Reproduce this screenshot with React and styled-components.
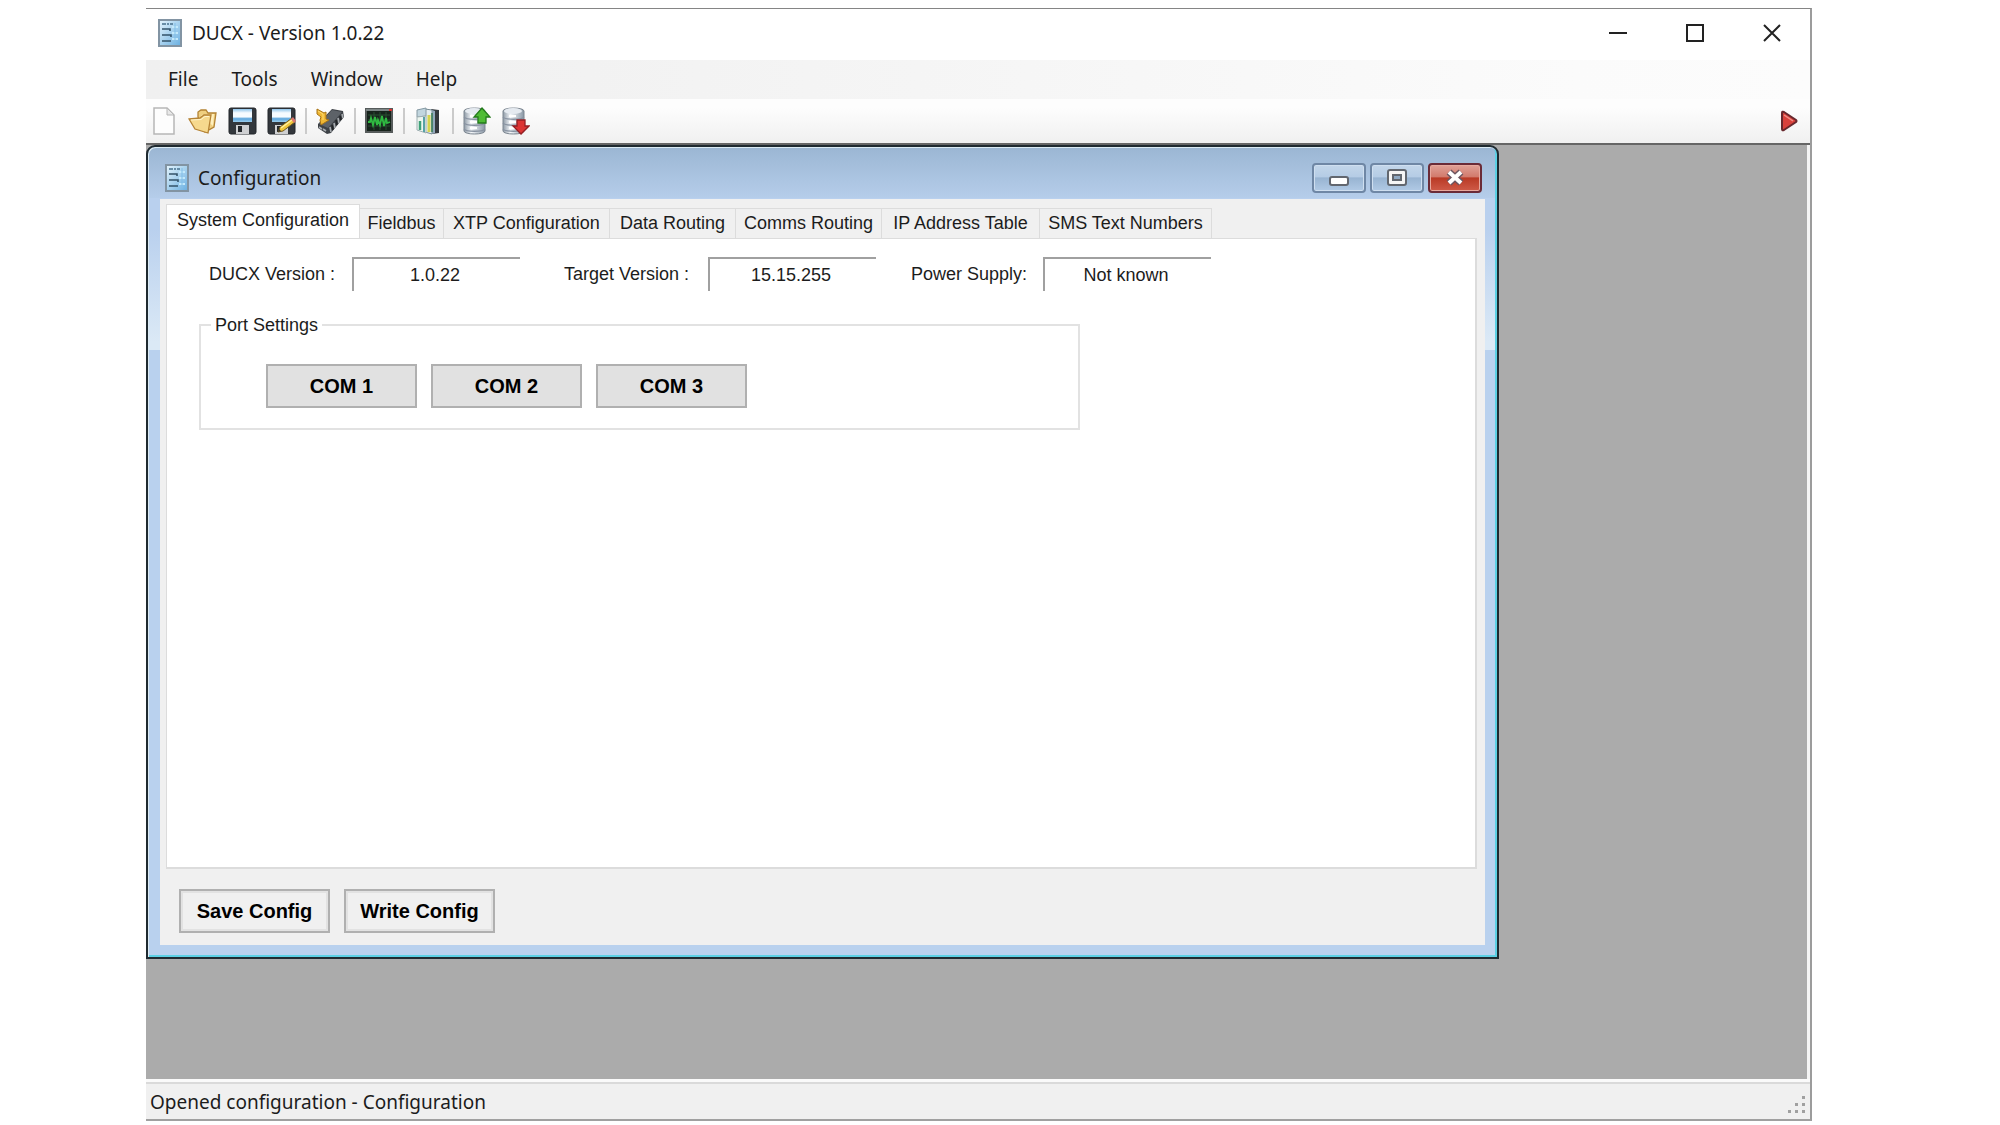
import React from 'react';
import styled, { createGlobalStyle } from 'styled-components';

const uiFont = `'Noto Sans', 'Open Sans', sans-serif`;
const formFont = `'Liberation Sans', Arial, sans-serif`;

const GlobalStyle = createGlobalStyle`
  * { box-sizing: border-box; }
  body {
    margin: 0;
    background: #fff;
    color: #1c1c1c;
    font-family: ${uiFont};
    font-size: 18px;
  }
  button, input { font: inherit; color: inherit; }
`;

const Desktop = styled.div`
  display: flex;
  min-height: 100vh;
  padding: 8px 188px 4px 146px;
`;

const MainWindow = styled.main`
  flex: 1;
  min-width: 0;
  display: flex;
  flex-direction: column;
  border-top: 1px solid #858585;
  border-right: 2px solid #9c9c9c;
  border-bottom: 2px solid #a0a0a0;
`;

const TitleBar = styled.header`
  display: flex;
  align-items: center;
  gap: 10px;
  height: 51px;
  padding: 0 0 4px 12px;
`;

const Title = styled.h1`
  flex: 1;
  margin: 0;
  font-size: 19px;
  line-height: 24px;
  font-weight: 400;
`;

const WindowButtons = styled.div`
  display: flex;
`;

const WindowButton = styled.button`
  display: grid;
  place-items: center;
  width: 77px;
  height: 46px;
  padding: 0;
  border: 0;
  background: none;
`;

const MenuBar = styled.nav`
  display: flex;
  align-items: center;
  gap: 33px;
  height: 39px;
  padding: 0 0 2px 22px;
  background: linear-gradient(90deg, #f0f0f0 0%, #f1f1f1 20%, #fbfbfb 86%, #fcfcfc 100%);
`;

const MenuItem = styled.button`
  padding: 0;
  border: 0;
  background: none;
  font-size: 19px;
  line-height: 24px;
`;

const ToolBar = styled.div`
  display: flex;
  align-items: center;
  height: 46px;
  padding: 0 11px 0 3px;
  border-bottom: 2px solid #666;
  background: linear-gradient(#fdfdfd 20%, #f0f0f0);
`;

const ToolButton = styled.button`
  display: grid;
  place-items: center;
  width: 30px;
  height: 30px;
  margin-right: 9px;
  padding: 0;
  border: 0;
  background: none;
`;

const Divider = styled.span`
  width: 2px;
  height: 26px;
  margin-right: 8px;
  background: #cbcbcb;
`;

const RunButton = styled(ToolButton)`
  width: 20px;
  margin: 0 0 0 auto;
`;

const Workspace = styled.section`
  flex: 1;
  display: flex;
  padding: 0 308px 120px 0;
  border-right: 3px solid #f4f4f4;
  background: #ababab;
`;

const ChildWindow = styled.section`
  flex: 1;
  min-width: 0;
  display: flex;
  flex-direction: column;
  padding: 0 12px 12px;
  border: 2px solid #1f2a30;
  border-radius: 9px 9px 0 0;
  background:
    linear-gradient(#9bb6d3, #b5cdea) top / 100% 51px no-repeat,
    linear-gradient(#b9d0ee 20%, #dbe9f6 95%) 0 51px / 100% 152px no-repeat,
    #b9d1ee;
  box-shadow: inset 1px 1px 0 #dcecf5, inset -2px -2px 0 #5cd0e4;
`;

const ChildTitleBar = styled.header`
  display: flex;
  align-items: center;
  gap: 9px;
  height: 52px;
  padding: 16px 3px 6px 5px;
`;

const ChildTitle = styled.h2`
  flex: 1;
  margin: 0;
  font-size: 19px;
  line-height: 24px;
  font-weight: 400;
`;

const GlassButtons = styled.div`
  display: flex;
  gap: 4px;
`;

const GlassButton = styled.button`
  display: grid;
  place-items: center;
  width: 54px;
  height: 30px;
  padding: 0;
  border: 2px solid ${(p) => (p.$danger ? '#6b2b37' : '#6f87a5')};
  border-radius: 4px;
  background: ${(p) =>
    p.$danger
      ? 'linear-gradient(#e0a197 0%, #d27b6d 45%, #b93a26 50%, #cf5b48 100%)'
      : 'linear-gradient(#c3d6ea 0%, #b5cce5 45%, #98b4d2 50%, #b1cae5 100%)'};
  box-shadow: inset 0 0 0 1px ${(p) => (p.$danger ? '#e8a99e' : '#cfdff0')};
`;

const ChildBody = styled.div`
  flex: 1;
  display: flex;
  flex-direction: column;
  padding: 5px 8px 12px 6px;
  background: #f0f0f0;
  font-family: ${formFont};
`;

const TabList = styled.div`
  display: flex;
  align-items: flex-end;
`;

const Tab = styled.button`
  flex: 0 0 ${(p) => p.$width}px;
  height: ${(p) => (p.$active ? 35 : 30)}px;
  margin-bottom: ${(p) => (p.$active ? -1 : 0)}px;
  padding: 0 0 ${(p) => (p.$active ? 4 : 0)}px;
  border: 1px solid #dcdcdc;
  border-left-width: ${(p) => (p.$active ? 1 : 0)}px;
  border-bottom: 0;
  background: ${(p) => (p.$active ? '#fff' : '#f0f0f0')};
  white-space: nowrap;
`;

const TabPanel = styled.div`
  flex: 1;
  padding: 18px 32px;
  border: 1px solid #dcdcdc;
  border-width: 1px 2px 2px 1px;
  background: #fff;
`;

const FieldRow = styled.div`
  display: grid;
  grid-template-columns: 355px 347px 300px;
  padding-left: 10px;
`;

const Field = styled.label`
  display: flex;
  align-items: center;
  justify-content: space-between;
  width: ${(p) => p.$width}px;
  white-space: nowrap;
`;

const FieldValue = styled.input`
  width: 168px;
  height: 34px;
  padding: 0 4px 0 0;
  border: 0 solid #a0a0a0;
  border-width: 2px 0 0 2px;
  outline: 0;
  background: #fff;
  text-align: center;
`;

const PortGroup = styled.fieldset`
  display: flex;
  gap: 14px;
  max-width: 881px;
  margin: 24px 0 0;
  padding: 29px 65px 20px;
  border: 2px solid #e2e2e2;
`;

const Legend = styled.legend`
  margin-left: -55px;
  padding: 0 4px;
  line-height: 20px;
`;

const FormButton = styled.button`
  width: 151px;
  height: 44px;
  padding: 0;
  border: 2px solid #b0b0b0;
  background: ${(p) => (p.$flat ? '#f0f0f0' : '#e1e1e1')};
  box-shadow: ${(p) => (p.$flat ? 'inset 0 0 0 2px #e2e2e2' : 'none')};
  color: #000;
  font-size: 20px;
  font-weight: 700;
`;

const Actions = styled.div`
  display: flex;
  gap: 14px;
  padding: 20px 0 0 13px;
`;

const StatusBar = styled.footer`
  display: flex;
  align-items: center;
  justify-content: space-between;
  height: 40px;
  padding: 2px 0 0 4px;
  border-top: 3px solid #fafafa;
  background: #f0f0f0;
  box-shadow: inset 0 2px 0 #dadada;
  font-size: 19px;
  line-height: 24px;
`;

const AppIcon = () => (
  <svg width="24" height="28" viewBox="0 0 24 28" aria-hidden="true">
    <defs>
      <linearGradient id="appFill" x1="0" y1="0" x2="1" y2="1">
        <stop offset="0" stopColor="#e6f5fd" />
        <stop offset="1" stopColor="#68aee0" />
      </linearGradient>
    </defs>
    <rect x="1" y="1" width="22" height="26" fill="url(#appFill)" stroke="#8294a3" strokeWidth="2" />
    <path d="M4 5h4M9 5h2M12 5h3" stroke="#47708c" strokeWidth="1.5" />
    <path d="M4 10h8v2M4 16h9v2M4 22h9" stroke="#33536a" strokeWidth="1.6" fill="none" />
    <path d="M14 8h6M14 14h6M14 20h6" stroke="#c3e9fb" strokeWidth="2" />
    <path d="M17 4v20" stroke="#81bfe7" />
  </svg>
);

const NewIcon = () => (
  <svg width="28" height="30" viewBox="0 0 28 30" aria-hidden="true">
    <path d="M4 2h13l7 7v19H4z" fill="#fdfdfd" stroke="#b6b6b6" strokeWidth="1.5" />
    <path d="M17 2v7h7z" fill="#e8e8e8" stroke="#b6b6b6" />
  </svg>
);

const OpenIcon = () => (
  <svg width="30" height="28" viewBox="0 0 30 28" aria-hidden="true">
    <path d="M10 10V5l3-2h5l2 3h8l-2 14-9 5z" fill="#efcf80" stroke="#b38333" strokeWidth="1.3" />
    <path d="M13 8l13-1-1 12" fill="#fff0be" />
    <path d="M1 12l11-1 4-3h7l-3 18-13-4z" fill="#f6d98e" stroke="#b58335" strokeWidth="1.3" />
    <path d="M3 13l10-.5 4-3h4" stroke="#fff4cc" fill="none" />
  </svg>
);

const SaveIcon = ({ pencil }) => (
  <svg width="29" height="28" viewBox="0 0 29 28" aria-hidden="true">
    <defs>
      <linearGradient id="diskLabel" x1="0" y1="0" x2="0" y2="1">
        <stop offset="0" stopColor="#8fc4ea" />
        <stop offset=".3" stopColor="#f6fbff" />
        <stop offset=".6" stopColor="#f6fbff" />
        <stop offset=".75" stopColor="#5aa4dc" />
        <stop offset="1" stopColor="#9ccdec" />
      </linearGradient>
    </defs>
    <rect x="1" y="1" width="27" height="26" rx="2" fill="#33373c" stroke="#22262a" />
    <rect x="5" y="2" width="19" height="13" fill="url(#diskLabel)" />
    <rect x="8" y="18" width="13" height="9" fill="#cfd0d2" />
    <rect x="10" y="19" width="4" height="6" fill="#24272b" />
    {pencil && (
      <g>
        <path d="M11 25l2-5 12-9 3 4-12 9z" fill="#f0c63c" stroke="#725b20" />
        <path d="M14 21l11-8" stroke="#fff0a0" strokeWidth="1.5" />
        <path d="M24 12l2-2 3 4-2 2z" fill="#d97670" />
        <path d="M11 25l1-3 2 2z" fill="#333" />
      </g>
    )}
  </svg>
);

const ChipIcon = () => (
  <svg width="30" height="28" viewBox="0 0 30 28" aria-hidden="true">
    <path d="M3 17L17 2l11 2 1 6-13 16-4 1-9-6z" fill="#3d4146" />
    <path d="M4 17L17 3l10 2-14 16z" fill="#5d6268" />
    <path d="M15 20l1 5M19 16l1 5M23 11l1 5M27 7l1 4M4 20l3 2M8 22l3 2" stroke="#a9adb1" strokeWidth="1.6" />
    <path d="M17 18l1 5M21 13l1 5M25 9l1 4" stroke="#202326" strokeWidth="1.5" />
    <path d="M2 2l7 4 2-1v7l3 1-8 5-1-5 1-3-4-3z" fill="#efb733" stroke="#a77316" />
    <path d="M3 4l5 3v6" fill="none" stroke="#ffdc73" />
  </svg>
);

const ScopeIcon = () => (
  <svg width="28" height="26" viewBox="0 0 28 26" aria-hidden="true">
    <rect x="1" y="1" width="26" height="23" fill="#17231c" stroke="#565b5b" strokeWidth="2" />
    <path d="M1 2h25" stroke="#7e8787" strokeWidth="2" />
    <path d="M24 1h3v2h-3z" fill="#d33" />
    <path d="M3 7h22M3 12h22M3 18h22M9 4v18M15 4v18M21 4v18" stroke="#294e30" />
    <path d="M3 14h2l1-4 2 7 2-8 2 8 1-5 2 5 2-9 2 10 2-8 1 5 3-1" fill="none" stroke="#2fb941" strokeWidth="1.8" />
  </svg>
);

const BooksIcon = () => (
  <svg width="26" height="28" viewBox="0 0 26 28" aria-hidden="true">
    <path d="M16 2l8 1v23l-7 1z" fill="#34383d" />
    <path d="M17 3l3 1v22l-3 1z" fill="#91a7bb" />
    <path d="M10 2l7 1v24l-7-2z" fill="#e4edf0" stroke="#788d96" />
    <path d="M2 3l9-2v8L2 10z" fill="#c2d6df" stroke="#8498a2" />
    <path d="M2 10l9-1v17l-9-3z" fill="#edf5ef" stroke="#9fb0b3" />
    <path d="M5 14v9" stroke="#3fa178" strokeWidth="2.5" />
    <path d="M9 10v15" stroke="#57a2a6" strokeWidth="2" />
    <path d="M14 8v17" stroke="#d5d44f" strokeWidth="3" />
    <path d="M17 6v19" stroke="#397d54" strokeWidth="1.5" />
  </svg>
);

const DatabaseIcon = ({ up }) => (
  <svg width="28" height="30" viewBox="0 0 28 30" aria-hidden="true">
    <defs>
      <linearGradient id="drum">
        <stop offset="0" stopColor="#8d99a5" />
        <stop offset=".35" stopColor="#f4f7fa" />
        <stop offset="1" stopColor="#8997a5" />
      </linearGradient>
    </defs>
    <path d="M1 5c0-4 21-4 21 0v20c0 4-21 4-21 0z" fill="url(#drum)" stroke="#7d8791" />
    <ellipse cx="11" cy="5" rx="9" ry="3" fill="#e5eaf0" />
    <path d="M1 11c2 3 19 3 21 0M1 17c2 3 19 3 21 0M1 23c2 3 19 3 21 0" fill="none" stroke="#8791a0" strokeWidth="1.3" />
    <path d="M7 10h7M7 16h7M7 22h7" stroke="#fff" strokeWidth="2" />
    {up ? (
      <path d="M19 2l8 9h-4v6h-8v-6h-4z" fill="#4fbc35" stroke="#237b1b" strokeWidth="1.3" />
    ) : (
      <path d="M15 14h8v6h4l-8 8-8-8h4z" fill="#dc3434" stroke="#931f24" strokeWidth="1.3" />
    )}
  </svg>
);

const RunIcon = () => (
  <svg width="18" height="22" viewBox="0 0 18 22" aria-hidden="true">
    <path d="M2 3q0-2 2-1l12 8q1 1 0 2L4 20q-2 1-2-1z" fill="#d9413c" stroke="#68282d" strokeWidth="2" />
    <path d="M4 5l9 6" stroke="#f09088" strokeWidth="1.5" />
  </svg>
);

const ResizeGrip = () => (
  <svg width="22" height="22" viewBox="0 0 22 22" fill="#a0a0a0" aria-hidden="true">
    <path d="M14 5h3v3h-3zM7 12h3v3H7zM14 12h3v3h-3zM0 19h3v3H0zM7 19h3v3H7zM14 19h3v3h-3z" />
  </svg>
);

const tabs = [
  { name: 'System Configuration', width: 194 },
  { name: 'Fieldbus', width: 84 },
  { name: 'XTP Configuration', width: 166 },
  { name: 'Data Routing', width: 126 },
  { name: 'Comms Routing', width: 146 },
  { name: 'IP Address Table', width: 158 },
  { name: 'SMS Text Numbers', width: 172 },
];

const fields = [
  { label: 'DUCX Version :', value: '1.0.22', width: 311 },
  { label: 'Target Version :', value: '15.15.255', width: 312 },
  { label: 'Power Supply:', value: 'Not known', width: 300 },
];

const App = () => {
  return (
    <Desktop>
      <GlobalStyle />
      <MainWindow>
        <TitleBar>
          <AppIcon />
          <Title>DUCX - Version 1.0.22</Title>
          <WindowButtons>
            <WindowButton aria-label="Minimize">
              <svg width="18" height="18"><path d="M0 9h18" stroke="#222" strokeWidth="2" /></svg>
            </WindowButton>
            <WindowButton aria-label="Maximize">
              <svg width="18" height="18"><rect x="1" y="1" width="16" height="16" fill="none" stroke="#222" strokeWidth="2" /></svg>
            </WindowButton>
            <WindowButton aria-label="Close">
              <svg width="18" height="18"><path d="M1 1l16 16M17 1L1 17" stroke="#222" strokeWidth="2" /></svg>
            </WindowButton>
          </WindowButtons>
        </TitleBar>

        <MenuBar>
          <MenuItem>File</MenuItem>
          <MenuItem>Tools</MenuItem>
          <MenuItem>Window</MenuItem>
          <MenuItem>Help</MenuItem>
        </MenuBar>

        <ToolBar>
          <ToolButton aria-label="New"><NewIcon /></ToolButton>
          <ToolButton aria-label="Open"><OpenIcon /></ToolButton>
          <ToolButton aria-label="Save"><SaveIcon /></ToolButton>
          <ToolButton aria-label="Save as"><SaveIcon pencil /></ToolButton>
          <Divider />
          <ToolButton aria-label="Hardware"><ChipIcon /></ToolButton>
          <Divider />
          <ToolButton aria-label="Monitor"><ScopeIcon /></ToolButton>
          <Divider />
          <ToolButton aria-label="Library"><BooksIcon /></ToolButton>
          <Divider />
          <ToolButton aria-label="Upload"><DatabaseIcon up /></ToolButton>
          <ToolButton aria-label="Download"><DatabaseIcon /></ToolButton>
          <RunButton aria-label="Run"><RunIcon /></RunButton>
        </ToolBar>

        <Workspace>
          <ChildWindow>
            <ChildTitleBar>
              <AppIcon />
              <ChildTitle>Configuration</ChildTitle>
              <GlassButtons>
                <GlassButton aria-label="Minimize configuration">
                  <svg width="20" height="20"><rect x="1" y="9" width="18" height="8" rx="2" fill="#fff" stroke="#62676f" strokeWidth="2" /></svg>
                </GlassButton>
                <GlassButton aria-label="Maximize configuration">
                  <svg width="20" height="18">
                    <rect x="1" y="1" width="18" height="15" rx="2" fill="#f5f5f5" stroke="#62676f" strokeWidth="2" />
                    <rect x="6" y="6" width="8" height="5" fill="#8fa9c4" stroke="#62676f" strokeWidth="2" />
                  </svg>
                </GlassButton>
                <GlassButton $danger aria-label="Close configuration">
                  <svg width="20" height="18">
                    <path d="M4 3l12 11M16 3L4 14" stroke="#6b5560" strokeWidth="7" />
                    <path d="M4 3l12 11M16 3L4 14" stroke="#fff" strokeWidth="4" />
                  </svg>
                </GlassButton>
              </GlassButtons>
            </ChildTitleBar>

            <ChildBody>
              <TabList role="tablist">
                {tabs.map((tab, i) => (
                  <Tab key={tab.name} role="tab" aria-selected={i === 0} $active={i === 0} $width={tab.width}>
                    {tab.name}
                  </Tab>
                ))}
              </TabList>

              <TabPanel role="tabpanel">
                <FieldRow>
                  {fields.map((field) => (
                    <Field key={field.label} $width={field.width}>
                      {field.label}
                      <FieldValue readOnly value={field.value} />
                    </Field>
                  ))}
                </FieldRow>

                <PortGroup>
                  <Legend>Port Settings</Legend>
                  <FormButton>COM 1</FormButton>
                  <FormButton>COM 2</FormButton>
                  <FormButton>COM 3</FormButton>
                </PortGroup>
              </TabPanel>

              <Actions>
                <FormButton $flat>Save Config</FormButton>
                <FormButton $flat>Write Config</FormButton>
              </Actions>
            </ChildBody>
          </ChildWindow>
        </Workspace>

        <StatusBar>
          <span>Opened configuration - Configuration</span>
          <ResizeGrip />
        </StatusBar>
      </MainWindow>
    </Desktop>
  );
};

export default App;
